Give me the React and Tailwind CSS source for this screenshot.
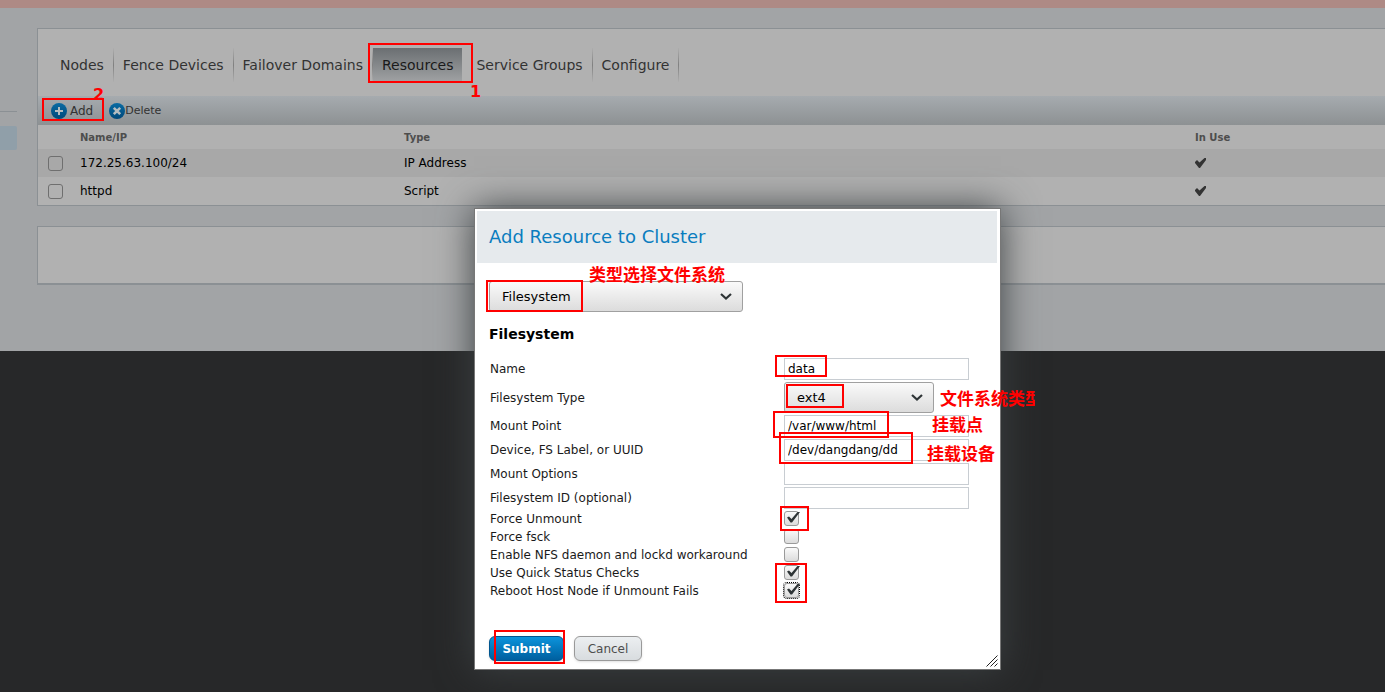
import clsx from "clsx"

const tabs = ["Nodes", "Fence Devices", "Failover Domains", "Resources", "Service Groups", "Configure"]

const resources = [
    { name: "172.25.63.100/24", type: "IP Address" },
    { name: "httpd", type: "Script" },
]

const textFields = [
    { id: "mount-point", label: "Mount Point", value: "/var/www/html" },
    { id: "device", label: "Device, FS Label, or UUID", value: "/dev/dangdang/dd" },
    { id: "mount-options", label: "Mount Options", value: "" },
    { id: "fs-id", label: "Filesystem ID (optional)", value: "" },
]

const flags = [
    { id: "force-unmount", label: "Force Unmount", checked: true },
    { id: "force-fsck", label: "Force fsck", checked: false },
    { id: "nfs", label: "Enable NFS daemon and lockd workaround", checked: false },
    { id: "quick-status", label: "Use Quick Status Checks", checked: true },
    { id: "reboot-host", label: "Reboot Host Node if Unmount Fails", checked: true, focused: true },
]

const RoundIcon = ({ cross }) => (
    <svg viewBox="0 0 16 16" className="w-4 h-4 shrink-0" aria-hidden="true">
        <defs>
            <linearGradient id={cross ? "blue-x" : "blue-plus"} x1="0" y1="0" x2="0" y2="1">
                <stop offset="0" stopColor="#0a6ba3" />
                <stop offset="1" stopColor="#00487a" />
            </linearGradient>
        </defs>
        <circle cx="8" cy="8" r="8" fill={cross ? "url(#blue-x)" : "url(#blue-plus)"} />
        <path
            d={cross ? "M4.800 4.800l6.400 6.400M11.200 4.800l-6.400 6.400" : "M8 4v8M4 8h8"}
            stroke="#b4bcc0"
            strokeWidth={cross ? 2.6 : 2}
        />
    </svg>
)

const InUseIcon = () => (
    <svg viewBox="0 0 12 12" className="w-3 h-3" role="img" aria-label="In use">
        <path d="M0 5l2-2 2.5 2.5L9.500 1H11v2L5 11H4L0 6z" fill="#333" />
    </svg>
)

const Select = ({ id, label, value, className }) => (
    <div className={clsx("relative", className)}>
        <select
            id={id}
            aria-label={label}
            defaultValue={value}
            className="block appearance-none w-full h-[31px] pt-px pl-3 pr-8 text-[13px] text-black rounded-[3px] border border-[#a0a0a0] bg-linear-to-b from-[#fafafa] to-[#dcdcdc]"
        >
            <option>{value}</option>
        </select>
        <svg viewBox="0 0 12 8" className="absolute right-[11px] top-3 w-3 h-2 pointer-events-none" aria-hidden="true">
            <path d="M1 1l5 4.500L11 1" fill="none" stroke="#2e3436" strokeWidth="2.2" />
        </svg>
    </div>
)

const TextRow = ({ id, label, value }) => (
    <>
        <label htmlFor={id}>{label}</label>
        <input
            id={id}
            type="text"
            defaultValue={value}
            className="w-[185px] h-[22px] px-[3px] text-[12px] text-black border border-[#c8cdd2] bg-white outline-none"
        />
    </>
)

const FlagRow = ({ id, label, checked, focused }) => (
    <>
        <label htmlFor={id} className="leading-4">{label}</label>
        <div className="relative w-4 h-4">
            <input
                id={id}
                type="checkbox"
                defaultChecked={checked}
                className={clsx(
                    "peer block appearance-none w-[15px] h-[15px] rounded-[3px] border border-[#9a9a9a] bg-linear-to-b from-[#fafafa] to-[#dcdcdc]",
                    focused && "outline-1 outline-dotted outline-black"
                )}
            />
            <svg
                viewBox="0 0 13 11"
                className="hidden peer-checked:block absolute left-[3px] top-px w-[13px] h-[11px] pointer-events-none"
                aria-hidden="true"
            >
                <path d="M0 5.500L2 4.500l2.500 2.500L10.500 0H13L5 10.500H3.500z" fill="#2e3436" />
            </svg>
        </div>
    </>
)

// red frame and note drawn on top of the screen
const Frame = ({ className }) => (
    <div className={clsx("absolute border-2 border-[#f00] pointer-events-none", className)} />
)

const Note = ({ className, children }) => (
    <span
        className={clsx(
            "absolute leading-[22px] font-bold text-[#f00] whitespace-nowrap overflow-hidden pointer-events-none",
            className
        )}
    >
        {children}
    </span>
)

const ResourcesPanel = () => (
    <section className="border border-r-0 border-[#8b9094] bg-[#b1b1b1]">
        <nav className="flex items-center h-[67px] pl-[13px] pt-[5px] text-[14px] text-[#333]">
            {tabs.map((tab) => (
                <a
                    key={tab}
                    href="#"
                    className={clsx(
                        "flex items-center h-[34px] px-[9px]",
                        tab === "Resources"
                            ? "mr-[5px] bg-linear-to-b from-[#6b6f72] to-[#a0a2a4] text-[#1a1a1a]"
                            : "border-r [border-image:linear-gradient(transparent,#808080,transparent)_1]"
                    )}
                >
                    {tab}
                </a>
            ))}
        </nav>
        <div className="flex items-center gap-4 h-[29px] px-[13px] bg-linear-to-b from-[#a6abaf] to-[#8d9193] text-[#333]">
            <button type="button" className="flex items-center gap-[3px] text-[12px]">
                <RoundIcon />
                Add
            </button>
            <button type="button" className="flex items-center text-[11px] leading-[18px]">
                <RoundIcon cross />
                Delete
            </button>
        </div>
        <table className="w-full table-fixed text-left text-[12px] text-black">
            <thead>
                <tr className="h-6 text-[10px] text-[#4d4d4d]">
                    <th className="w-[42px]"></th>
                    <th className="w-[324px]">Name/IP</th>
                    <th className="w-[791px]">Type</th>
                    <th>In Use</th>
                </tr>
            </thead>
            <tbody>
                {resources.map((resource) => (
                    <tr key={resource.name} className="h-7 odd:bg-[#a8a8a8]">
                        <td className="pl-[10px]">
                            <input
                                type="checkbox"
                                aria-label={resource.name}
                                className="block appearance-none w-[15px] h-[15px] rounded-[3px] border border-[#6f6f6f]"
                            />
                        </td>
                        <td>{resource.name}</td>
                        <td>{resource.type}</td>
                        <td>
                            <InUseIcon />
                        </td>
                    </tr>
                ))}
            </tbody>
        </table>
    </section>
)

const AddResourceDialog = () => (
    <div
        role="dialog"
        aria-labelledby="dialog-title"
        className="absolute left-[474px] top-[208px] w-[527px] p-0.5 pr-[3px] border border-[#777] bg-white text-[12px] text-[#1a1a1a] shadow-[0_0_35px_#3c4143]"
    >
        <header className="flex items-center h-[52px] px-3 pb-0.5 bg-[#e6eaed]">
            <h1 id="dialog-title" className="text-[18px] text-[#0a7dbf]">
                Add Resource to Cluster
            </h1>
        </header>
        <form className="px-3 pt-[18px] pb-[6px]">
            <Select label="Resource type" value="Filesystem" className="w-[254px]" />
            <h2 className="py-3 text-[14px] leading-5 font-bold text-black">Filesystem</h2>
            <div className="grid grid-cols-[294px_1fr] items-center gap-y-0.5 pt-0.5 pl-px">
                <TextRow id="name" label="Name" value="data" />
                <label htmlFor="fs-type">Filesystem Type</label>
                <Select id="fs-type" value="ext4" className="w-[150px]" />
                {textFields.map((field) => (
                    <TextRow key={field.id} {...field} />
                ))}
                {flags.map((flag) => (
                    <FlagRow key={flag.id} {...flag} />
                ))}
            </div>
            <div className="flex gap-[10px] pt-[37px]">
                <button
                    type="submit"
                    className="w-[75px] h-[25px] rounded-md border border-[#00558f] bg-linear-to-b from-[#0d94dc] to-[#005f9f] font-bold text-white shadow-sm"
                >
                    Submit
                </button>
                <button
                    type="button"
                    className="w-[68px] h-[25px] rounded-md border border-[#999] bg-linear-to-b from-[#eceff1] to-[#d8dcdf] text-[#4d4d4d] shadow-sm"
                >
                    Cancel
                </button>
            </div>
        </form>
        <svg viewBox="0 0 12 12" className="absolute right-0.5 bottom-0.5 w-3 h-3" aria-hidden="true">
            <path d="M0.500 11.500l11-11M4.500 11.500l7-7M8.500 11.500l3-3" stroke="#222" />
        </svg>
    </div>
)

const App = () => {
    return (
        <div className="relative min-h-screen overflow-hidden bg-[#272829] font-['DejaVu_Sans','Noto_Sans_CJK_SC',sans-serif]">
            <div className="h-2 bg-[#ae8a85]" />
            <main className="flex gap-5 pb-[66px] bg-[#a2a4a6]">
                <aside className="w-[17px] pt-[103px]">
                    <div className="h-[15px] border-t border-[#8b9094]" />
                    <div className="h-6 rounded-r-xs bg-[#909fa9]" />
                </aside>
                <div className="flex-1 min-w-0 pt-5">
                    <ResourcesPanel />
                    <section className="h-[59px] mt-5 border border-b-2 border-r-0 border-[#8b9094] bg-[#b1b1b1]" />
                </div>
            </main>

            <AddResourceDialog />

            <Frame className="left-[368px] top-[43px] w-[105px] h-10" />
            <Note className="left-[470px] top-[81px] text-[16px]">1</Note>
            <Note className="left-[93px] top-[84px] h-[14px] text-[16px]">2</Note>
            <Frame className="left-[42px] top-[98px] w-[62px] h-[23px]" />
            <Frame className="left-[486px] top-[280px] w-[97px] h-8" />
            <Note className="left-[589px] top-[264px] text-[17px]">类型选择文件系统</Note>
            <Frame className="left-[775px] top-[355px] w-[52px] h-[22px]" />
            <Frame className="left-[786px] top-[384px] w-[58px] h-6" />
            <Note className="left-[940px] top-[388px] w-[95px] text-[17px]">文件系统类型</Note>
            <Frame className="left-[773px] top-[411px] w-[116px] h-[27px]" />
            <Note className="left-[932px] top-[414px] text-[17px]">挂载点</Note>
            <Frame className="left-[779px] top-[432px] w-[134px] h-8" />
            <Note className="left-[927px] top-[443px] text-[17px]">挂载设备</Note>
            <Frame className="left-[780px] top-[506px] w-[29px] h-[25px]" />
            <Frame className="left-[775px] top-[563px] w-8 h-10" />
            <Frame className="left-[494px] top-[630px] w-[71px] h-[34px]" />
        </div>
    )
}

export default App
